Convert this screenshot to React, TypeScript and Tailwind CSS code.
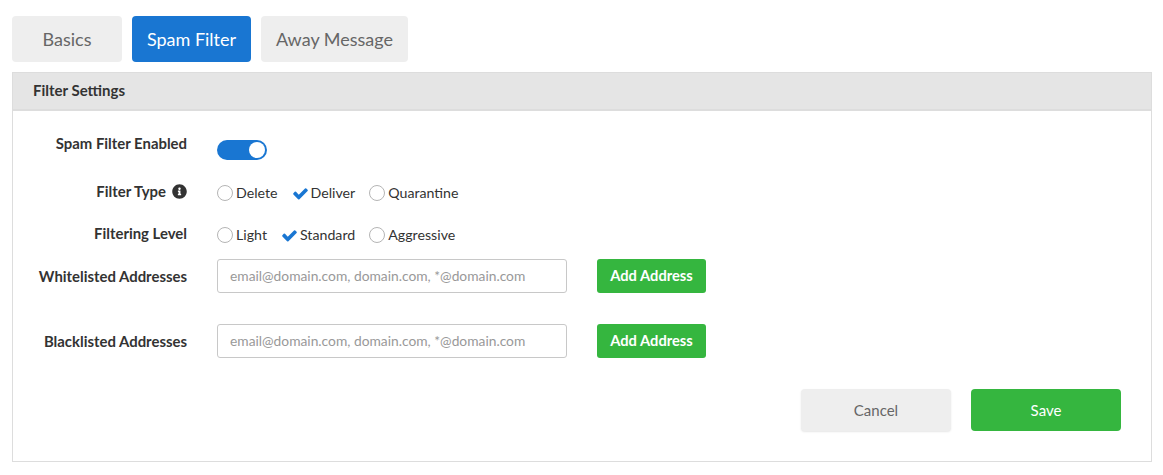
import React from 'react';
import { FaInfoCircle } from 'react-icons/fa';

const CheckMark: React.FC = () => (
  <svg viewBox="0 0 1792 1792" className="w-[17px] h-[17px] mr-[2px] fill-[#1976d2]">
    <path d="M1671 566q0 40-28 68l-724 724-136 136q-28 28-68 28t-68-28l-136-136-362-362q-28-28-28-68t28-68l136-136q28-28 68-28t68 28l294 295 656-657q28-28 68-28t68 28l136 136q28 28 28 68z" />
  </svg>
);

const Radio: React.FC<{ label: string; checked?: boolean }> = ({ label, checked }) => (
  <label className="flex items-center">
    {checked ? (
      <CheckMark />
    ) : (
      <span className="w-[16px] h-[16px] mr-[3px] rounded-full border border-[#b5b5b5] bg-white" />
    )}
    <span>{label}</span>
  </label>
);

const AddressRow: React.FC<{ label: string }> = ({ label }) => (
  <div className="flex items-center h-[34px]">
    <div className="w-[174px] text-right font-bold text-[14.9px] text-[#333]">{label}</div>
    <input
      placeholder="email@domain.com, domain.com, *@domain.com"
      className="ml-[30px] w-[350px] h-[34px] px-[12px] pb-[2px] rounded-[3px] border border-[#c8c8c8] bg-white text-[13.8px] placeholder:text-[#999] outline-none"
    />
    <button className="ml-[30px] w-[109px] h-[34px] pb-[2px] rounded-[3px] bg-[#35b63f] text-white font-bold text-[14.7px]">
      Add Address
    </button>
  </div>
);

const App: React.FC = () => {
  return (
    <div className="w-[1163px] h-[475px] bg-white pt-[16px] px-[12px] font-['Lato',sans-serif] text-[#333]">
      <div className="flex gap-[10px] text-[18px]">
        <button className="w-[110px] h-[46px] rounded-[4px] bg-[#eeeeee] text-[#666]">Basics</button>
        <button className="w-[119px] h-[46px] rounded-[4px] bg-[#1976d2] text-white">Spam Filter</button>
        <button className="w-[147px] h-[46px] rounded-[4px] bg-[#eeeeee] text-[#666]">Away Message</button>
      </div>

      <div className="mt-[10px] w-[1140px] h-[390px] border border-[#dddddd]">
        <div className="h-[38px] flex items-center pl-[20px] pb-[2px] bg-[#e5e5e5] border-b-2 border-[#dddddd] font-bold text-[15px]">
          Filter Settings
        </div>

        <div className="pt-[29px] pr-[30px] text-[14.2px]">
          <div className="flex items-start h-[21px]">
            <div className="w-[174px] text-right font-bold text-[14.9px] -mt-[8px]">Spam Filter Enabled</div>
            <div className="ml-[30px] w-[50px] h-[20px] rounded-full bg-[#1976d2] flex items-center justify-end pr-[2px]">
              <span className="w-[16px] h-[16px] rounded-full bg-white" />
            </div>
          </div>

          <div className="flex items-center h-[20px] mt-[22px]">
            <div className="w-[174px] pb-[4px] flex justify-end items-center gap-[6px] font-bold text-[14.9px]">
              Filter Type
              <FaInfoCircle className="w-[15px] h-[15px] text-[#333]" />
            </div>
            <div className="ml-[30px] flex gap-[14px]">
              <Radio label="Delete" />
              <Radio label="Deliver" checked />
              <Radio label="Quarantine" />
            </div>
          </div>

          <div className="flex items-center h-[20px] mt-[22px]">
            <div className="w-[174px] pb-[4px] text-right font-bold text-[14.9px]">Filtering Level</div>
            <div className="ml-[30px] flex gap-[14px]">
              <Radio label="Light" />
              <Radio label="Standard" checked />
              <Radio label="Aggressive" />
            </div>
          </div>

          <div className="mt-[14px] flex flex-col gap-[31px]">
            <AddressRow label="Whitelisted Addresses" />
            <AddressRow label="Blacklisted Addresses" />
          </div>

          <div className="mt-[31px] flex justify-end gap-[20px] text-[15px]">
            <button className="w-[150px] h-[42px] rounded-[4px] bg-[#eeeeee] text-[#666] shadow-[0_1px_2px_rgba(0,0,0,0.1)]">
              Cancel
            </button>
            <button className="w-[150px] h-[42px] rounded-[4px] bg-[#35b63f] text-white">Save</button>
          </div>
        </div>
      </div>
    </div>
  );
};

export default App;
